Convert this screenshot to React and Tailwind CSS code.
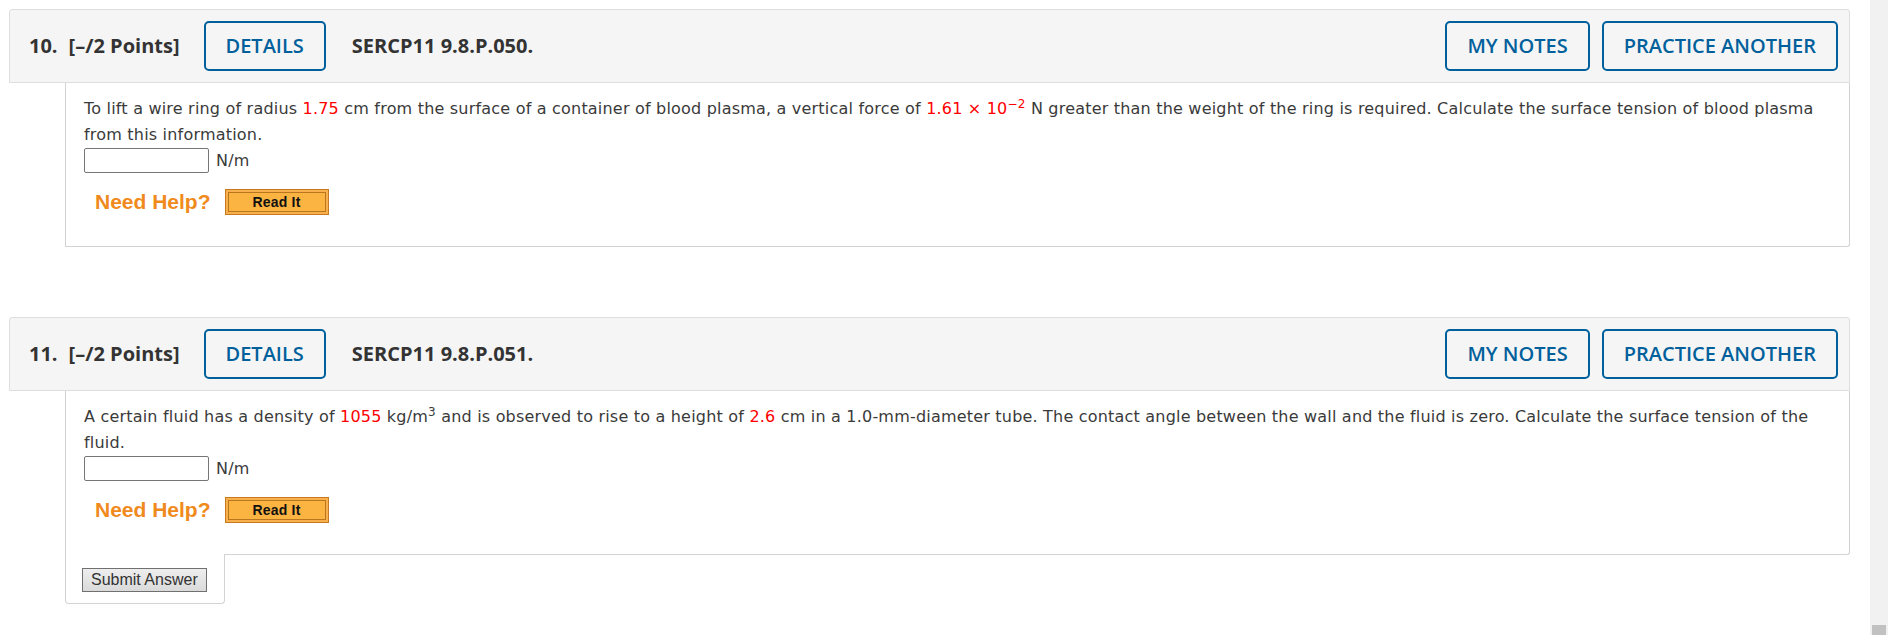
const questions = [
  {
    num: '10.',
    code: 'SERCP11 9.8.P.050.',
    body: (
      <>
        To lift a wire ring of radius <span className="text-[#ff0000]">1.75</span> cm from the surface of a container of blood plasma, a vertical force of{' '}
        <span className="text-[#ff0000]">
          1.61 × 10<sup>−2</sup>
        </span>{' '}
        N greater than the weight of the ring is required. Calculate the surface tension of blood plasma
        <br />
        from this information.
      </>
    ),
  },
  {
    num: '11.',
    code: 'SERCP11 9.8.P.051.',
    body: (
      <>
        A certain fluid has a density of <span className="text-[#ff0000]">1055</span> kg/m<sup>3</sup> and is observed to rise to a height of{' '}
        <span className="text-[#ff0000]">2.6</span> cm in a 1.0-mm-diameter tube. The contact angle between the wall and the fluid is zero. Calculate the surface tension of the
        <br />
        fluid.
      </>
    ),
    submit: true,
  },
];

function OutlineButton({ children }) {
  return (
    <button className="h-[50px] px-[20px] rounded-[5px] border-2 border-[#00609c] bg-transparent font-['Open_Sans',sans-serif] text-[20px] font-semibold leading-none text-[#00609c]">
      {children}
    </button>
  );
}

function ReadIt() {
  return (
    <div className="h-[26px] w-[104px] border border-[#c77a22] bg-[#f8b04c] p-[2px]">
      <div className="flex h-full items-center justify-center border border-[#b9761f] bg-[#fbb441] font-['Liberation_Sans',Arial,sans-serif] text-[14px] font-bold leading-none text-[#111]">
        Read It
      </div>
    </div>
  );
}

function Question({ q, first }) {
  return (
    <div className={first ? '' : 'mt-[70px]'}>
      {/* header bar */}
      <div className="flex h-[74px] items-center rounded-t-[3px] border border-[#dedede] bg-[#f5f5f5] pl-[19px] pr-[11px] font-['Open_Sans',sans-serif] text-[20px] font-bold text-[#333]">
        <span>{q.num}</span>
        <span className="ml-[11px]">[–/2 Points]</span>
        <div className="ml-[24px]">
          <OutlineButton>DETAILS</OutlineButton>
        </div>
        <span className="ml-[26px]">{q.code}</span>
        <div className="ml-auto flex gap-[12px]">
          <OutlineButton>MY NOTES</OutlineButton>
          <OutlineButton>PRACTICE ANOTHER</OutlineButton>
        </div>
      </div>

      {/* body */}
      <div className="ml-[56px] rounded-br-[3px] border-x border-b border-[#d3d3d3] bg-white pl-[18px] pr-[18px] pt-[13px] pb-[31px] font-['DejaVu_Sans',Verdana,sans-serif] text-[16px] leading-[26px] tracking-[0.2px] text-[#3a3a3a]">
        <p>{q.body}</p>
        <div className="flex h-[25px] items-center gap-[7px]">
          <input type="text" className="h-[25px] w-[125px] rounded-[2px] border border-[#767676] bg-white" />
          <span>N/m</span>
        </div>
        <div className="mt-[16px] flex h-[26px] items-center gap-[14px] pl-[11px]">
          <span className="font-['Liberation_Sans',Arial,sans-serif] text-[21px] font-bold tracking-normal text-[#f08a1d]">Need Help?</span>
          <ReadIt />
        </div>
      </div>

      {q.submit && (
        <div className="relative ml-[56px] -mt-px w-[160px] rounded-b-[4px] border-x border-b border-[#d3d3d3] bg-white pl-[16px] pt-[13px] pb-[11px]">
          <button className="h-[24px] border border-[#707070] bg-gradient-to-b from-[#eeeeee] to-[#dadada] px-[8px] font-['Liberation_Sans',Arial,sans-serif] text-[16px] leading-none text-[#333]">
            Submit Answer
          </button>
        </div>
      )}
    </div>
  );
}

export default function App() {
  return (
    <div className="flex h-[635px] w-full overflow-hidden bg-white">
      <div className="flex-1 pl-[9px] pr-[20px] pt-[9px]">
        {questions.map((q, i) => (
          <Question key={q.num} q={q} first={i === 0} />
        ))}
      </div>
      {/* scrollbar */}
      <div className="flex h-full w-[18px] flex-col justify-end bg-[#f1f1f1] pl-[2px]">
        <div className="h-[10px] w-[14px] bg-[#c1c1c1]" />
      </div>
    </div>
  );
}
